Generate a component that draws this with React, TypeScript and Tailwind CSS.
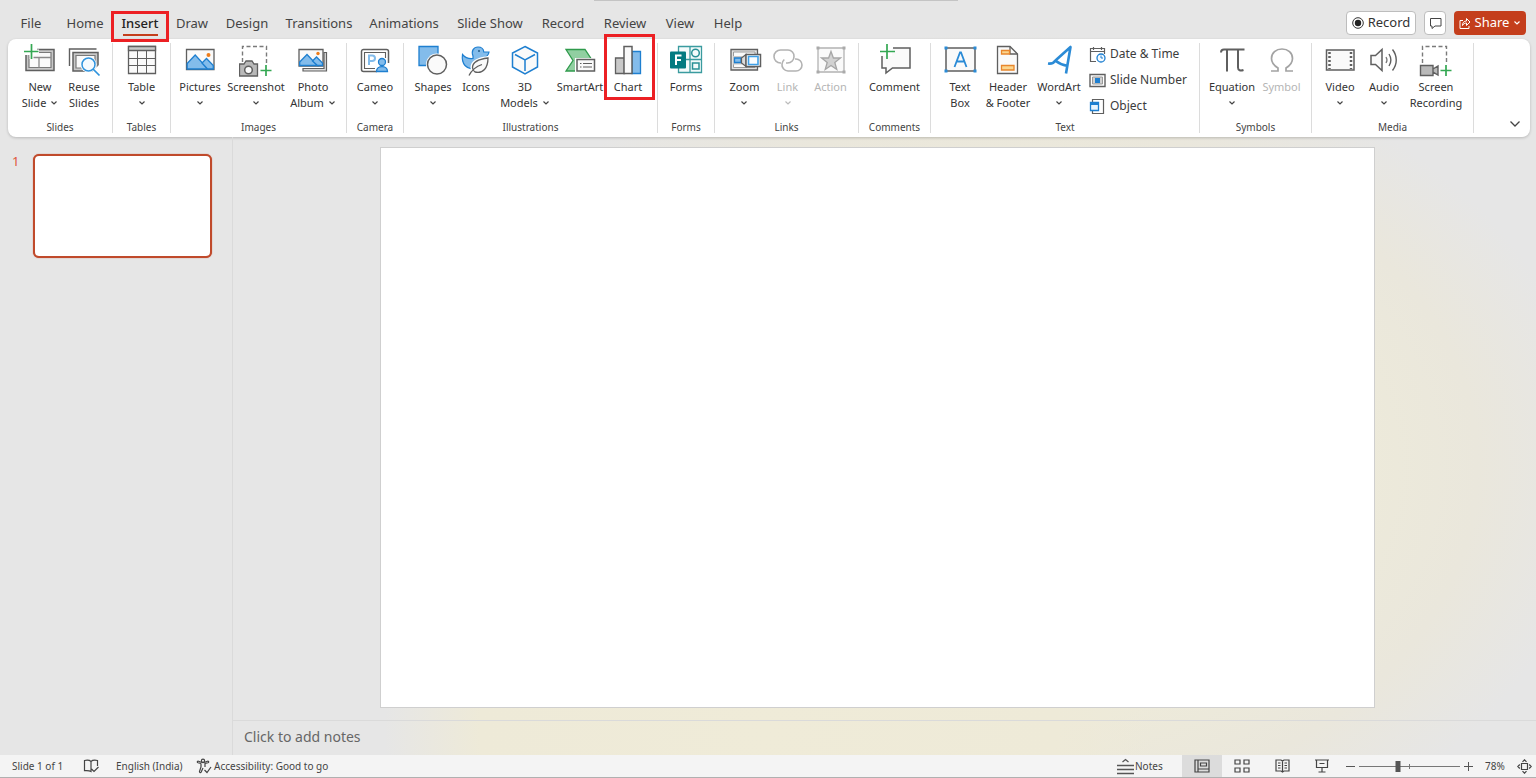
import React from "react";

const G = "#5f5f5f";
const B = "#1e7fd0";
const LB = "#83bceb";
const GR = "#34a853";

type IconProps = { children: React.ReactNode };
const Ico = ({ children }: IconProps) => (
  <svg width="34" height="34" viewBox="0 0 34 34" fill="none" strokeWidth="1.3" className="shrink-0" aria-hidden="true">
    {children}
  </svg>
);

const NewSlide = () => (
  <Ico>
    <path d="M3 6.500h28v21H3z" fill="#c8c8c8" stroke={G} strokeWidth="1.500" />
    <path d="M6 9.500h22v15H6z" fill="#fafafa" stroke="#7a7a7a" strokeWidth="1.200" />
    <path d="M6 14.500h22M16 14.500v10" stroke="#8a8a8a" />
    <path d="M0 4h14v8H0z" fill="#fff" />
    <path d="M8.500 1v15M2 8.500h14" stroke="#fff" strokeWidth="4" />
    <path d="M8.500 1v15M1 8.500h14.500" stroke={GR} strokeWidth="1.700" />
  </Ico>
);
const ReuseSlides = () => (
  <Ico>
    <path d="M2.500 23V6h27" stroke={G} strokeWidth="1.400" />
    <path d="M6 9.500h25v18.500H6z" fill="#c8c8c8" stroke={G} strokeWidth="1.500" />
    <path d="M9 12.500h19V25H9z" fill="#fafafa" stroke="#7a7a7a" strokeWidth="1.200" />
    <circle cx="21.500" cy="21.500" r="8" fill="#fff" />
    <path d="M25 29h8v-8z" fill="#fff" />
    <circle cx="21.500" cy="21.500" r="6.500" fill="#f4faff" stroke="#2f93dd" strokeWidth="1.500" />
    <path d="M26 26l6.500 6.500" stroke="#2f93dd" strokeWidth="1.700" />
  </Ico>
);
const TableIcon = () => (
  <Ico>
    <path d="M3.500 3.500h27v27h-27z" fill="#fafafa" stroke={G} />
    <path d="M3.500 3.500h27v4h-27z" fill="#c8c8c8" stroke={G} />
    <path d="M3.500 15.500h27M3.500 22.500h27M12.500 7.500v23M21.500 7.500v23" stroke={G} strokeWidth="1" />
  </Ico>
);
const Pictures = () => (
  <Ico>
    <path d="M3.500 6.500h27.500v20H3.500z" fill="#fafafa" stroke={G} />
    <path d="M4.200 20.500l8-8.500L25 26H4.200z" fill={LB} stroke={B} />
    <path d="M19 20l4.500-4.500L30.300 22.500V26H24.500z" fill={LB} stroke={B} />
    <circle cx="25.500" cy="12" r="2" fill="#ee7d1b" />
  </Ico>
);
const Screenshot = () => (
  <Ico>
    <g transform="translate(-1.500 0)">
      <path d="M5 19V3.500h24V21" stroke="#7a7a7a" strokeWidth="1.400" strokeDasharray="4 2.500" />
      <path d="M2 21h4.500l2-3h6l2 3H20v12H2z" fill="#b9b9b9" stroke={G} />
      <circle cx="11" cy="27" r="3.800" fill="#fafafa" stroke={G} strokeWidth="1.500" />
      <path d="M28.500 22v11M23 27.500h11" stroke={GR} strokeWidth="1.700" />
    </g>
  </Ico>
);
const PhotoAlbum = () => (
  <Ico>
    <path d="M7 28h23.500V9.500H28v16H7z" fill="#dedede" stroke={G} strokeWidth="1.200" />
    <path d="M3 6.500h24v16.500H3z" fill="#fafafa" stroke={G} />
    <path d="M3.700 19L11 11.500 21.500 22.500H3.700z" fill={LB} stroke={B} />
    <path d="M16.500 18l4-4 6 6v2.500h-5z" fill={LB} stroke={B} />
    <circle cx="22" cy="10.500" r="1.700" fill="#ee7d1b" />
  </Ico>
);
const Cameo = () => (
  <Ico>
    <path d="M19 28.500H5.500a2 2 0 0 1-2-2v-18a2 2 0 0 1 2-2h23a2 2 0 0 1 2 2V20" stroke={G} strokeWidth="1.500" />
    <path d="M17 25.500H6.500V9.500h21V15" stroke={G} strokeWidth="1.100" />
    <path d="M11 22V12.500h3.200a2.800 2.800 0 0 1 0 5.600H11" stroke={LB} strokeWidth="2" />
    <circle cx="24" cy="19" r="3.500" fill={LB} stroke={B} />
    <path d="M18.500 28.500c0-6.500 11-6.500 11 0z" fill={LB} stroke={B} />
  </Ico>
);
const Shapes = () => (
  <Ico>
    <path d="M3 3.500h19v19H3z" fill={LB} stroke={B} />
    <circle cx="21" cy="21.500" r="11" fill="#fff" />
    <circle cx="21" cy="21.500" r="9.500" fill="#fafafa" stroke={G} strokeWidth="1.500" />
  </Ico>
);
const Icons = () => (
  <Ico>
    <path d="M14 13c-2-5 .5-9 5-9 3.500 0 5.500 2 5.800 5H30c-.5 4-3 5.500-7 6.500 1 3 .5 6-2 8-5 4-12 2.500-15-1C3 19 3 15 3.500 11.500c2.500 3 6 4.500 10.500 4z" fill={LB} stroke={B} strokeWidth="1.200" />
    <circle cx="20" cy="8" r="1" fill="#235a86" />
    <path d="M29 15c-8 1-15.500 3-15.500 9.500 0 2 1 3.500 2.500 4.500 8 2 13-4 13-14z" fill="#fafafa" stroke="#fff" strokeWidth="4" />
    <path d="M29 15c-8 1-15.500 3-15.500 9.500 0 2 1 3.500 2.500 4.500 8 2 13-4 13-14zM10 32.500c3-6 7-9 13-11" fill="#fafafa" stroke={G} />
  </Ico>
);
const Cube = () => (
  <Ico>
    <path d="M17 3.500l12.500 6.500v14L17 31 4.500 24V10z" fill="#fafafa" stroke={B} strokeWidth="1.500" />
    <path d="M7 11.500l10 5.500 10-5.500M17 17v11" stroke={B} strokeWidth="1.500" />
  </Ico>
);
const SmartArt = () => (
  <Ico>
    <path d="M3 6.500h19l7 10.500-6 11H3l7-10.500z" fill="#91cfa1" stroke="#2f9a4c" />
    <path d="M12 15h21v17H12z" fill="#fff" />
    <path d="M14 16.500h17.500v11.500H14z" fill="#fafafa" stroke={G} strokeWidth="1.500" />
    <path d="M17 20.500h1.500M20 20.500h9M17 24h1.500M20 24h9" stroke={G} strokeWidth="1.200" />
  </Ico>
);
const Chart = () => (
  <Ico>
    <path d="M4.500 15h9v15.500h-9z" fill="#c8c8c8" stroke={G} />
    <path d="M21 8.500h8.500v22H21z" fill={LB} stroke={B} />
    <path d="M13 3.500h8v27h-8z" fill="#fafafa" stroke={G} strokeWidth="1.500" />
  </Ico>
);
const FormsIcon = () => (
  <Ico>
    <path d="M9.500 3.500h23v26h-23zM9.500 16.500h23M21 3.500v26" fill="#f4fbfb" stroke="#3a9b9f" />
    <circle cx="26.500" cy="10" r="3.800" stroke="#2a9196" strokeWidth="1.500" />
    <path d="M23.500 20h6.500v6h-6.500z" stroke="#2a9196" strokeWidth="1.500" />
    <rect x="1" y="8.500" width="16" height="17" rx="1" fill="#037b81" />
    <path d="M7 22V12.500h5.500M7 17h5" stroke="#fff" strokeWidth="2" />
  </Ico>
);
const Zoom = () => (
  <Ico>
    <path d="M3 6.500h26.500v20.500H3z" fill="#e4e4e4" stroke={G} />
    <path d="M5.500 9h21.500v15.500H5.500z" fill="#fafafa" stroke="#9a9a9a" strokeWidth="1" />
    <path d="M5 13h9.500v8.500H5z" fill="#c8c8c8" />
    <path d="M6.500 15h6.500v4.500H6.500z" fill={LB} stroke={B} />
    <path d="M13.500 15l4.500-3.500v12l-4.500-3.500z" fill="#dcdcdc" stroke={G} strokeWidth="1.200" />
    <path d="M18 11.500h14.500v12H18z" fill="#fff" stroke={G} strokeWidth="1.500" />
    <path d="M20.500 13.500h9.500v8h-9.500z" fill="#fafdff" stroke="#3f9fe6" strokeWidth="1.600" />
  </Ico>
);
const Link = () => (
  <Ico>
    <path d="M10 20h-.5a6.500 6.500 0 0 1 0-13H17a6 6 0 0 1 6 6.500c0 3.500-2.500 6.500-6.500 6.500H15" stroke="#b3b3b3" strokeWidth="1.600" />
    <path d="M24 16h1a6 6 0 0 1 0 12h-8a6.200 6.200 0 0 1-6-7c.3-2 1-3.300 2.300-4.500" stroke="#b3b3b3" strokeWidth="1.600" />
  </Ico>
);
const Action = () => (
  <Ico>
    <path d="M4 5h26v24H4z" fill="#fafafa" stroke="#b3b3b3" />
    <path d="M17 8.500l2.400 6.500h7.100l-5.700 4.500 2 7L17 22.500l-5.800 4 2-7L7.500 15h7.100z" fill="#d2d2d2" stroke="#a6a6a6" />
    <path d="M2.500 3.500h3v3h-3zM28.500 3.500h3v3h-3zM2.500 27.500h3v3h-3zM28.500 27.500h3v3h-3z" fill="#aaa" />
  </Ico>
);
const Comment = () => (
  <Ico>
    <path d="M15 5h17v20H14.500l-6.500 5v-5H4V13" fill="#fafafa" stroke={G} strokeWidth="1.500" />
    <path d="M0 3h14v10H0z" fill="#fff" />
    <path d="M9 1v15M2 8.500h15" stroke={GR} strokeWidth="1.700" />
  </Ico>
);
const TextBox = () => (
  <Ico>
    <path d="M3 5h29v23H3z" fill="#fafafa" stroke={G} strokeWidth="1.500" />
    <path d="M11.500 24L17 9.500h1L23.500 24M13.500 18.500h8" stroke="#2b8bd6" strokeWidth="1.800" />
    <path d="M1.500 3.500h3v3h-3zM30.500 3.500h3v3h-3zM1.500 26.500h3v3h-3zM30.500 26.500h3v3h-3z" fill="#2b8bd6" />
  </Ico>
);
const HeaderFooter = () => (
  <Ico>
    <path d="M6.500 3.500h12.500l7.500 7.500v19.500h-20z" fill="#fafafa" stroke={G} />
    <path d="M19 3.500V11h7.500" stroke={G} />
    <path d="M10.500 7.500h8v3.500h-8zM10.500 22.500h12.500v4.500H10.500z" fill="#fbd58d" stroke="#e8862c" />
  </Ico>
);
const WordArt = () => (
  <Ico>
    <path d="M6 20.500c3.500.5 6-.5 8-3.500L28.500 4 24 30.500M13 17.500c4 3 7 4.500 13 5.500" stroke="#2b8bd6" strokeWidth="2.600" strokeLinejoin="round" />
  </Ico>
);
const Pi = () => (
  <Ico>
    <path d="M6 9.500C6 7 7 6.500 9 6.500h20.500M12 7v21.500M23 7v17.500c0 3 2.500 3.500 5.500 2.500" stroke={G} strokeWidth="2" />
  </Ico>
);
const Omega = () => (
  <Ico>
    <path d="M6 28h7v-3C8 22 6.500 19 6.500 15.500 6.500 10 11 6 17 6s10.500 4 10.500 9.500c0 3.500-1.500 6.500-6.500 9.500v3h7" stroke="#a3a3a3" strokeWidth="1.700" />
  </Ico>
);
const Video = () => (
  <Ico>
    <path d="M3.500 7h27.500v20H3.500z" fill="#fafafa" stroke={G} strokeWidth="1.500" />
    <path d="M6.500 9v17M28 9v17" stroke={G} strokeWidth="2.500" strokeDasharray="2 2" />
  </Ico>
);
const Audio = () => (
  <Ico>
    <path d="M4 12.500h4.500l6.500-6v21l-6.500-6H4z" fill="#fafafa" stroke={G} strokeWidth="1.500" />
    <path d="M19 14c1.300 2 1.300 4 0 6" stroke="#777" />
    <path d="M22 11c2.500 4 2.500 8 0 12M25.500 6.500c5 6.500 5 14.500 0 21" stroke={G} strokeWidth="1.400" />
  </Ico>
);
const ScreenRec = () => (
  <Ico>
    <g transform="translate(-1.500 0)">
      <path d="M5 20V3.500h24V21" stroke="#7a7a7a" strokeWidth="1.400" strokeDasharray="4 2.500" />
      <path d="M3 22.500h12.500v10H3zM15.500 26l5-3v9l-5-3z" fill="#b9b9b9" stroke={G} strokeWidth="1.400" />
      <path d="M28.500 22v11M23 27.500h11" stroke={GR} strokeWidth="1.700" />
    </g>
  </Ico>
);

const Caret = ({ color = "#444" }: { color?: string }) => (
  <svg width="8" height="6" viewBox="0 0 8 6" fill="none" className="inline-block" aria-hidden="true">
    <path d="M1.500 1.500L4 4l2.500-2.500" stroke={color} strokeWidth="1.200" />
  </svg>
);

type ToolProps = { icon: React.ReactNode; a: string; b?: string; caret?: boolean; width: string; off?: boolean; marked?: boolean };
const Tool = ({ icon, a, b, caret, width, off, marked }: ToolProps) => (
  <button type="button" disabled={off} className={`relative flex shrink-0 flex-col items-center gap-[2px] whitespace-nowrap text-[11px] leading-4 ${width} ${off ? "text-[#b5b5b5]" : "text-[#333]"}`}>
    {icon}
    <span className="flex flex-col items-center">
      <span>{a}</span>
      <span className="flex h-4 items-center gap-1">
        {b}
        {caret && <Caret color={off ? "#bbb" : "#444"} />}
      </span>
    </span>
    {marked && <span className="absolute -top-[9px] -left-[2px] h-[66px] w-[51px] border-3 border-[#ec2024]" />}
  </button>
);

const Group = ({ name, className, pad = "", children }: { name: string; className: string; pad?: string; children: React.ReactNode }) => (
  <section aria-label={name} className={`relative flex shrink-0 flex-col justify-between border-r border-[#dcdcdc] ${className}`}>
    <div className={`flex ${pad}`}>{children}</div>
    <div className="text-center text-[10px] leading-3 text-[#444]">{name}</div>
  </section>
);

const Mini = ({ icon, label }: { icon: React.ReactNode; label: string }) => (
  <button type="button" className="flex h-[26px] items-center gap-1 text-xs whitespace-nowrap text-[#3c3c3c]">
    <svg width="17" height="17" viewBox="0 0 17 17" fill="none" aria-hidden="true">{icon}</svg>
    {label}
  </button>
);

const tabs: [string, string][] = [
  ["File", "w-[50px]"], ["Home", "w-[58px]"], ["Insert", "w-[52px]"], ["Draw", "w-[52px]"], ["Design", "w-[58px]"],
  ["Transitions", "w-[86px]"], ["Animations", "w-[84px]"], ["Slide Show", "w-[88px]"], ["Record", "w-[58px]"],
  ["Review", "w-[66px]"], ["View", "w-[44px]"], ["Help", "w-[52px]"],
];

export default function App() {
  return (
    <div className="flex min-h-screen flex-col overflow-hidden bg-[#e6e6e6] bg-[radial-gradient(25%_32%_at_50%_94%,#efebd8_0%,#eeead8_75%,#eeead800_100%),radial-gradient(39%_56%_at_65%_60%,#f1ebd8_0%,#edeada_60%,#eae7dc_80%,#e6e6e400_100%)] font-['Noto_Sans','Open_Sans',sans-serif]">
      <div className="ml-[38.7%] h-px w-[364px] shrink-0 bg-[#c4c4c4]" />
      <header className="flex h-[38px] shrink-0 items-center justify-between pr-[10px] pl-[6px]">
        <nav className="flex pt-2">
          {tabs.map(([t, w]) => (
            <button key={t} type="button" className={`relative h-[30px] pb-[2px] text-center text-[13px] leading-7 whitespace-nowrap ${w} ${t === "Insert" ? "font-medium text-[#222]" : "text-[#444]"}`}>
              {t}
              {t === "Insert" && (
                <>
                  <span className="absolute bottom-[3px] left-[9px] h-[2px] w-[35px] bg-[#c43e1c]" />
                  <span className="absolute top-[2px] -left-[3px] h-[31px] w-[58px] border-3 border-[#ec2024]" />
                </>
              )}
            </button>
          ))}
        </nav>
        <div className="flex items-center gap-2 pt-[6px] text-[13px]">
          <button type="button" className="flex h-6 w-[70px] items-center justify-center gap-1 rounded border border-[#bdbdbd] bg-white text-[#333]">
            <svg width="12" height="12" viewBox="0 0 12 12" fill="none" aria-hidden="true"><circle cx="6" cy="6" r="5.300" stroke="#333" /><circle cx="6" cy="6" r="3.200" fill="#222" /></svg>
            Record
          </button>
          <button type="button" aria-label="Comments" className="flex h-6 w-[22px] items-center justify-center rounded border border-[#bdbdbd] bg-white">
            <svg width="13" height="13" viewBox="0 0 13 13" fill="none"><path d="M1.500 1.500h10.500v7.500H6l-3 2.500V9H1.500z" stroke="#444" /></svg>
          </button>
          <button type="button" className="flex h-6 w-[72px] items-center justify-center gap-1 rounded bg-[#c43e1c] text-white">
            <svg width="12" height="13" viewBox="0 0 12 13" fill="none" stroke="#fff" aria-hidden="true"><path d="M4 3.500H1v8h9V9M3.500 8.500c0-3 1.500-4.500 4-4.500V1.500L11 5 7.500 8.500V6c-2 0-3 .8-4 2.500z" /></svg>
            Share
            <Caret color="#fff" />
          </button>
        </div>
      </header>

      <div className="mr-[6px] ml-2 flex h-[98px] shrink-0 rounded-lg bg-white pt-1 pb-1 shadow-[0_1px_3px_rgba(0,0,0,0.2)]">
        <Group name="Slides" className="w-[105px]" pad="pl-[10px]">
          <Tool icon={<NewSlide />} a="New" b="Slide" caret width="w-[44px]" />
          <Tool icon={<ReuseSlides />} a="Reuse" b="Slides" width="w-[44px]" />
        </Group>
        <Group name="Tables" className="w-[58px]">
          <Tool icon={<TableIcon />} a="Table" caret width="w-[57px]" />
        </Group>
        <Group name="Images" className="w-[176px]" pad="pl-[2px]">
          <Tool icon={<Pictures />} a="Pictures" caret width="w-[54px]" />
          <Tool icon={<Screenshot />} a="Screenshot" caret width="w-[58px]" />
          <Tool icon={<PhotoAlbum />} a="Photo" b="Album" caret width="w-[56px]" />
        </Group>
        <Group name="Camera" className="w-[57px]">
          <Tool icon={<Cameo />} a="Cameo" caret width="w-[56px]" />
        </Group>
        <Group name="Illustrations" className="w-[254px]" pad="pl-[6px]">
          <Tool icon={<Shapes />} a="Shapes" caret width="w-[46px]" />
          <Tool icon={<Icons />} a="Icons" width="w-[40px]" />
          <Tool icon={<Cube />} a="3D" b="Models" caret width="w-[58px]" />
          <Tool icon={<SmartArt />} a="SmartArt" width="w-[52px]" />
          <Tool icon={<Chart />} a="Chart" width="w-[44px]" marked />
        </Group>
        <Group name="Forms" className="w-[57px]">
          <Tool icon={<FormsIcon />} a="Forms" width="w-[56px]" />
        </Group>
        <Group name="Links" className="w-[144px]" pad="pl-[8px]">
          <Tool icon={<Zoom />} a="Zoom" caret width="w-[43px]" />
          <Tool icon={<Link />} a="Link" caret off width="w-[43px]" />
          <Tool icon={<Action />} a="Action" off width="w-[43px]" />
        </Group>
        <Group name="Comments" className="w-[72px]">
          <Tool icon={<Comment />} a="Comment" width="w-[71px]" />
        </Group>
        <Group name="Text" className="w-[269px]" pad="pl-[5px]">
          <Tool icon={<TextBox />} a="Text" b="Box" width="w-[48px]" />
          <Tool icon={<HeaderFooter />} a="Header" b="& Footer" width="w-[48px]" />
          <Tool icon={<WordArt />} a="WordArt" caret width="w-[54px]" />
          <div className="-mt-[2px] -mb-2 flex flex-col pl-[3px]">
            <Mini label="Date & Time" icon={<><path d="M7 15.500H1.500v-13h14V8M1.500 5.500h14M4.500 1v3M12.500 1v3" stroke={G} strokeWidth="1.200" /><circle cx="12" cy="12" r="4" fill="#f4faff" stroke={B} strokeWidth="1.300" /><path d="M12 9.500V12h2" stroke={B} /></>} />
            <Mini label="Slide Number" icon={<><path d="M1 2.500h15v12H1z" fill="#fff" stroke={G} strokeWidth="1.400" /><path d="M3.500 5h10v7h-10z" fill="#d0d0d0" stroke="#999" /><path d="M6 6h5v5H6z" fill={B} /></>} />
            <Mini label="Object" icon={<><path d="M3.500 4V1.500h11v14h-11V13" stroke={G} strokeWidth="1.200" /><path d="M1.500 4.500h8v8h-8z" fill="#e9f4fd" stroke={B} strokeWidth="1.300" /><path d="M1.500 6h8" stroke={B} strokeWidth="2" /></>} />
          </div>
        </Group>
        <Group name="Symbols" className="w-[112px]" pad="pl-[6px]">
          <Tool icon={<Pi />} a="Equation" caret width="w-[52px]" />
          <Tool icon={<Omega />} a="Symbol" off width="w-[47px]" />
        </Group>
        <Group name="Media" className="w-[162px]" pad="pl-[6px]">
          <Tool icon={<Video />} a="Video" caret width="w-[44px]" />
          <Tool icon={<Audio />} a="Audio" caret width="w-[44px]" />
          <Tool icon={<ScreenRec />} a="Screen" b="Recording" width="w-[60px]" />
        </Group>
        <button type="button" aria-label="Collapse ribbon" className="mr-[9px] mb-[5px] ml-auto self-end">
          <svg width="12" height="8" viewBox="0 0 12 8" fill="none"><path d="M1.500 1.500L6 6l4.500-4.500" stroke="#444" strokeWidth="1.300" /></svg>
        </button>
      </div>

      <main className="flex flex-1">
        <aside className="flex w-[233px] shrink-0 items-start border-r border-[#dadada] pt-[17px] pl-3">
          <span className="w-[21px] text-[13px] leading-[14px] text-[#e0563a]">1</span>
          <button type="button" aria-label="Slide 1" className="h-[104px] w-[179px] rounded-md border-2 border-[#c04a2b] bg-white shadow-[0_0_1px_#c04a2b]" />
        </aside>
        <div className="flex min-w-0 flex-1 flex-col">
          <div className="flex flex-1 flex-col pt-[10px] pr-[161px] pb-3 pl-[147px]">
            <div className="flex-1 border border-[#cfcfcf] bg-white" />
          </div>
          <div className="h-[35px] border-t border-[#dadada] pl-[11px] text-sm leading-8 text-[#666]">Click to add notes</div>
        </div>
      </main>

      <footer className="flex h-[23px] shrink-0 items-center justify-between border-b border-[#b0b0b0] bg-[#f4f4f4] pl-3 text-[10px] text-[#444]">
        <div className="flex items-center">
          <span className="w-[71px]">Slide 1 of 1</span>
          <button type="button" aria-label="Spelling" className="w-[33px]">
            <svg width="16" height="16" viewBox="0 0 16 16" fill="none" stroke="#444" strokeWidth="1.200"><path d="M8 13.500c-1.500-1-4-1-6.500-.8V2.500C4 2 6.500 2 8 3.500v10zM8 3.500C9.500 2 12 2 14.500 2.500V8M8.500 11l2.500 2.500 4.500-4.500" /></svg>
          </button>
          <span className="w-[80px]">English (India)</span>
          <button type="button" className="flex items-center gap-[2px]">
            <svg width="16" height="16" viewBox="0 0 16 16" fill="none" stroke="#444" strokeWidth="1.200" aria-hidden="true"><circle cx="7" cy="2.800" r="1.600" /><path d="M5 5.500L2 4.800C.8 4.300 1.300 2.800 2.500 3.200L7 4.700l4.500-1.500c1.200-.4 1.700 1.100.5 1.600L9 5.500V9M5 5.500V9l-1.500 4.500c-.2 1.200 1.200 1.500 1.700.5L7 10M8.500 12l2.500 2.500L15 9" /></svg>
            Accessibility: Good to go
          </button>
        </div>
        <div className="flex h-full items-center">
          <button type="button" className="flex w-[65px] items-center">
            <svg width="17" height="17" viewBox="0 0 17 17" fill="none" stroke="#555" strokeWidth="1.300" aria-hidden="true"><path d="M5.500 4L8.500 1.500l3 2.500M0 7.500h17M0 11.500h17M0 15.500h17" /></svg>
            <span className="pl-px">Notes</span>
          </button>
          <button type="button" aria-label="Normal view" className="flex h-full w-[40px] items-center justify-center bg-[#dcdcdc]">
            <svg width="16" height="14" viewBox="0 0 16 14" fill="none" stroke="#444" strokeWidth="1.200"><path d="M1 1h14v12H1zM4 1v12M4 10h11M6.500 4h6v3h-6z" /></svg>
          </button>
          <button type="button" aria-label="Slide sorter" className="flex w-[40px] justify-center">
            <svg width="16" height="14" viewBox="0 0 16 14" fill="none" stroke="#444" strokeWidth="1.200"><path d="M1 1h5v4H1zM10 1h5v4h-5zM1 9h5v4H1zM10 9h5v4h-5z" /></svg>
          </button>
          <button type="button" aria-label="Reading view" className="flex w-[40px] justify-center">
            <svg width="15" height="14" viewBox="0 0 15 14" fill="none" stroke="#444" strokeWidth="1.200"><path d="M1 1h5l1.500 1L9 1h5v11H9l-1.500 1L6 12H1zM7.500 2v11M3 4h2.500M3 6.500h2.500M3 9h2.500M9.500 4H12M9.500 6.500H12M9.500 9H12" /></svg>
          </button>
          <button type="button" aria-label="Slide show" className="flex w-[40px] justify-center">
            <svg width="14" height="14" viewBox="0 0 14 14" fill="none" stroke="#444" strokeWidth="1.200"><path d="M0 1h14M1.500 1v7.500h11V1M4.500 4.500h5M7 8.500V13M3.500 13h7" /></svg>
          </button>
          <button type="button" aria-label="Zoom out" className="ml-1 w-[10px]">
            <svg width="9" height="9" viewBox="0 0 9 9" stroke="#555"><path d="M0 4.500h9" /></svg>
          </button>
          <svg width="101" height="13" viewBox="0 0 101 13" className="ml-[3px]" aria-hidden="true"><path d="M0 6.500h101M50.500 4v5" stroke="#777" /><rect x="36.500" y="1" width="5" height="11" fill="#555" /></svg>
          <button type="button" aria-label="Zoom in" className="ml-1 w-[10px]">
            <svg width="9" height="9" viewBox="0 0 9 9" stroke="#555"><path d="M0 4.500h9M4.500 0v9" /></svg>
          </button>
          <span className="ml-[11px] w-[32px]">78%</span>
          <button type="button" aria-label="Fit slide" className="mr-1">
            <svg width="15" height="15" viewBox="0 0 15 15" fill="none" stroke="#444" strokeWidth="1.200"><path d="M4.500 4.500h6v6h-6zM5.500 2.800l2-2 2 2M5.500 12.200l2 2 2-2M2.800 5.500l-2 2 2 2M12.200 5.500l2 2-2 2" /></svg>
          </button>
        </div>
      </footer>
    </div>
  );
}
